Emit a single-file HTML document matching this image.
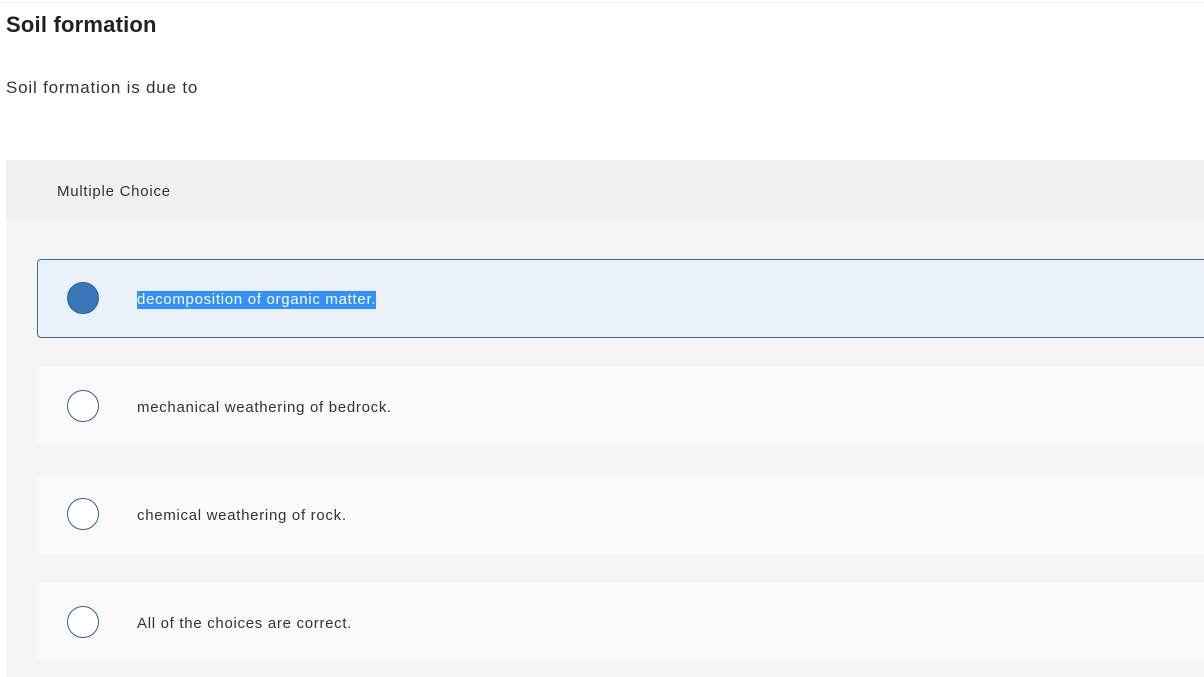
<!DOCTYPE html>
<html><head><meta charset="utf-8"><style>
html,body{margin:0;padding:0;background:#fff;width:1204px;height:677px;overflow:hidden;font-family:"Liberation Sans",sans-serif;color:#333;}
.top{position:absolute;left:0;top:2px;width:1204px;height:1px;background:#eee;}
h1{position:absolute;left:6px;top:11px;margin:0;font-size:22px;font-weight:bold;color:#222;line-height:28px;letter-spacing:0.2px}
.q{position:absolute;left:6px;top:77px;font-size:17px;line-height:22px;color:#333;letter-spacing:0.8px}
.panel{position:absolute;left:6px;top:160px;width:1198px;height:517px;background:#f5f5f5;}
.hdr{position:absolute;left:0;top:0;width:100%;height:60px;background:#f0f0f0;}
.hdr span{position:absolute;left:51px;top:23px;font-size:15px;color:#333;letter-spacing:0.75px}
.opt{position:absolute;left:31px;width:1180px;height:79px;background:#fafafa;border-radius:4px;box-sizing:border-box;}
.opt.sel{background:#eaf1fa;border:1px solid #3a6a99;}
.c{position:absolute;left:30px;top:23px;width:30px;height:30px;border:1.5px solid #2f619b;border-radius:50%;background:#fff;box-sizing:content-box}
.sel .c{background:#3a77b8;border-color:#2f619b;left:29px;top:22px}
.t{position:absolute;left:100px;top:32px;font-size:15px;color:#333;line-height:18px;letter-spacing:0.7px}
.sel .t{left:99px;top:31px;background:#3390ff;color:#fff}
</style></head><body>
<div class="top"></div>
<h1>Soil formation</h1>
<div class="q">Soil formation is due to</div>
<div class="panel">
<div class="hdr"><span>Multiple Choice</span></div>
<div class="opt sel" style="top:99px"><div class="c"></div><div class="t">decomposition of organic matter.</div></div>
<div class="opt" style="top:207px"><div class="c"></div><div class="t">mechanical weathering of bedrock.</div></div>
<div class="opt" style="top:315px"><div class="c"></div><div class="t">chemical weathering of rock.</div></div>
<div class="opt" style="top:423px"><div class="c"></div><div class="t">All of the choices are correct.</div></div>
</div>
</body></html>
